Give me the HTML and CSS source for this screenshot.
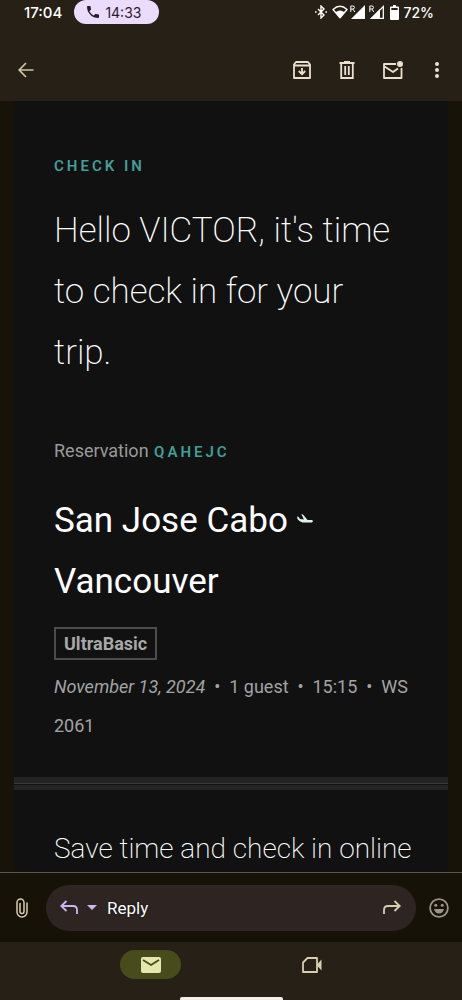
FILE: index.html
```html
<!DOCTYPE html>
<html lang="en">
<head>
<meta charset="utf-8">
<meta name="viewport" content="width=device-width, initial-scale=1">
<title>Check in</title>
<link rel="stylesheet" href="styles.css">
</head>
<body>
<div class="app">
  <header class="top">
    <div class="status">
      <span class="clock">17:04</span>
      <span class="call">
        <svg width="12" height="12" viewBox="3 3 18 18"><path fill="currentColor" d="M20 15.500c-1.200 0-2.400-.2-3.600-.6-.3-.1-.7 0-1 .2l-2.200 2.200c-2.800-1.400-5.100-3.800-6.600-6.600l2.200-2.200c.3-.3.400-.7.200-1-.3-1.100-.5-2.300-.5-3.500 0-.5-.5-1-1-1H4c-.5 0-1 .5-1 1 0 9.400 7.600 17 17 17 .5 0 1-.5 1-1v-3.500c0-.5-.5-1-1-1z"/></svg>
        14:33
      </span>
      <span class="signals">
        <svg width="12" height="14" viewBox="0 0 12 14" fill="none" stroke="currentColor" stroke-width="1.400"><path d="M3 4l6 6-3 3V1l3 3-6 6"/><path d="M0 7h1.600M10.400 7H12"/></svg>
        <svg class="wifi" width="16" height="14" viewBox="0 0 16 14"><path fill="none" stroke="currentColor" stroke-width="1.400" stroke-linejoin="round" d="M1 4.500Q8-1.800 15 4.500L8 12.800z"/><path fill="currentColor" d="M3.500 7.200Q8 4 12.500 7.200L8 13z"/></svg>
        <svg width="15" height="14" viewBox="0 0 15 14"><path fill="currentColor" d="M15 0v14H1z"/><path fill="none" stroke="currentColor" d="M.8 7V1h2Q4.500 1 4.500 2.500T2.800 4H.8M2.800 4l2 3"/></svg>
        <svg class="sim" width="15" height="14" viewBox="0 0 15 14"><path fill="none" stroke="currentColor" stroke-width="1.300" d="M14.300 1.600v11.700H2.600z"/><path fill="currentColor" d="M11 4v10H1z"/><path fill="none" stroke="currentColor" d="M.8 7V1h2Q4.500 1 4.500 2.500T2.800 4H.8M2.800 4l2 3"/></svg>
        <svg class="battery" width="9" height="15" viewBox="0 0 9 15"><path fill="currentColor" fill-rule="evenodd" d="M3 0h3v1.500h2q1 0 1 1V14q0 1-1 1H1q-1 0-1-1V2.500q0-1 1-1h2zM1.300 3v2h6.400V3z"/></svg>
        <span class="percent">72%</span>
      </span>
    </div>
    <nav class="toolbar">
      <button class="icon-button back" aria-label="Back"><svg width="16" height="16" viewBox="0 0 16 16" fill="none" stroke="currentColor" stroke-width="1.700"><path d="M15.500 8H1.500M8 1L1.200 8 8 15"/></svg></button>
      <button class="icon-button" aria-label="Archive"><svg width="18" height="18" viewBox="0 0 18 18" fill="none" stroke="currentColor" stroke-width="1.800"><path stroke-linejoin="round" d="M1 3.500L3 1h12l2 2.500V17H1zM1 4.500h16"/><path d="M9 7v6M5.800 10L9 13.200 12.200 10"/></svg></button>
      <button class="icon-button" aria-label="Delete"><svg width="16" height="18" viewBox="0 0 16 18" fill="none" stroke="currentColor" stroke-width="1.800"><path d="M.5 2h15M5 1h6M2.200 2v15h11.600V2M6.200 5v9M9.800 5v9"/></svg></button>
      <button class="icon-button" aria-label="Mark as unread"><svg width="20" height="18" viewBox="0 0 20 18"><path fill="none" stroke="currentColor" stroke-width="1.800" stroke-linejoin="round" d="M13 3H1v14h17.500V7M1.500 5.500L10 11l5-3.500"/><circle cx="17" cy="3" r="3" fill="currentColor"/></svg></button>
      <button class="icon-button more" aria-label="More options"><svg width="4" height="16" viewBox="0 0 4 16" fill="currentColor"><circle cx="2" cy="2" r="2"/><circle cx="2" cy="8" r="2"/><circle cx="2" cy="14" r="2"/></svg></button>
    </nav>
  </header>

  <main class="mail">
    <article class="letter">
      <section class="block">
        <p class="eyebrow">CHECK IN</p>
        <h1 class="greeting">Hello VICTOR, it's time to check in for your trip.</h1>
        <p class="reservation">Reservation <a class="code" href="#">QAHEJC</a></p>
        <h2 class="route">San Jose Cabo <svg class="plane" width="16" height="10" viewBox="0 0 16 10"><path fill="currentColor" d="M0 2.500l1.300.2 1.800 2.200 3.800.6L4.300 0l1.600.4 4.700 5.500h4.200q1.200.2 1.200 1.200T14.800 8.500H5.500Q2 7.500.5 5z"/></svg> Vancouver</h2>
        <span class="fare">UltraBasic</span>
        <p class="details"><em>November 13, 2024</em> &nbsp;•&nbsp; 1 guest &nbsp;•&nbsp; 15:15 &nbsp;•&nbsp; WS 2061</p>
      </section>
      <hr class="divider">
      <section class="block">
        <p class="save">Save time and check in online</p>
      </section>
    </article>
  </main>

  <div class="reply-bar">
    <button class="icon-button" aria-label="Attach"><svg width="12" height="20" viewBox="0 0 12 20" fill="none" stroke="currentColor" stroke-width="1.500"><path d="M11 4.500V14a5 5 0 0 1-10 0V4.500a3.500 3.500 0 0 1 7 0V13.500a2 2 0 0 1-4 0V5"/></svg></button>
    <div class="reply-pill">
      <button class="icon-button accent" aria-label="Reply type"><svg width="18" height="15" viewBox="0 0 18 15" fill="none" stroke="currentColor" stroke-width="1.800"><path d="M6.500 1L1.300 6l5.200 5M1.500 6H13q4 0 4 4v4"/></svg><svg width="10" height="5" viewBox="0 0 10 5" fill="currentColor"><path d="M0 0h10L5 5z"/></svg></button>
      <input class="reply-input" type="text" aria-label="Reply" placeholder="Reply">
      <button class="icon-button" aria-label="Forward"><svg width="18" height="15" viewBox="0 0 18 15" fill="none" stroke="currentColor" stroke-width="1.800"><path d="M11.500 1l5.200 5-5.200 5M16.500 6H5Q1 6 1 10v4"/></svg></button>
    </div>
    <button class="icon-button muted" aria-label="Emoji"><svg width="20" height="20" viewBox="0 0 20 20"><circle cx="10" cy="10" r="8.900" fill="none" stroke="currentColor" stroke-width="1.800"/><path fill="currentColor" d="M5 11h10q-1.200 4.500-5 4.500T5 11z"/><circle cx="6.800" cy="7.300" r="1.500" fill="currentColor"/><circle cx="13.200" cy="7.300" r="1.500" fill="currentColor"/></svg></button>
  </div>

  <footer class="bottom">
    <nav class="tabs">
      <button class="tab active" aria-label="Mail"><svg width="20" height="16" viewBox="0 0 20 16"><rect width="20" height="16" rx="2" fill="currentColor"/><path d="M2 3l8 5 8-5" fill="none" stroke="#484b1c" stroke-width="1.800"/></svg></button>
      <button class="tab" aria-label="Meet"><svg width="20" height="16" viewBox="0 0 20 16"><path fill="none" stroke="currentColor" stroke-width="1.800" stroke-linejoin="round" d="M5.500 1H15v14H1V5.500z"/><path fill="currentColor" d="M14.500 8l5-5.500v11z"/></svg></button>
    </nav>
    <div class="handle"></div>
  </footer>
</div>
</body>
</html>
```
FILE: styles.css
```css
* {
  box-sizing: border-box;
}

body {
  margin: 0;
  background: #181309;
  color: #fff;
  font-family: Roboto, "Liberation Sans", sans-serif;
}

h1, h2, p {
  margin: 0;
}

svg {
  display: block;
}

button {
  border: 0;
  padding: 0;
  background: none;
  font: inherit;
}

.app {
  display: flex;
  flex-direction: column;
  height: 100vh;
}

.top {
  background: #272017;
}

.status {
  display: flex;
  align-items: center;
  height: 24px;
  padding: 0 28px 0 24px;
  font-family: Inter, Roboto, sans-serif;
  font-size: 15px;
  font-weight: 500;
}

.call {
  display: flex;
  align-items: center;
  gap: 6px;
  height: 24px;
  margin-left: 12px;
  padding: 0 18px 0 13px;
  border-radius: 12px;
  background: #ecdcfb;
  color: #2d1b2a;
  font-size: 14px;
  font-weight: 400;
}

.signals {
  display: flex;
  align-items: center;
  margin-left: auto;
}

.wifi {
  margin: 0 2px 0 5px;
}

.sim {
  margin-left: 4px;
}

.battery {
  margin: 0 4px 0 6px;
}

.percent {
  font-size: 14px;
}

.toolbar {
  display: flex;
  align-items: center;
  gap: 28px;
  height: 77px;
  padding: 15px 23px 0 18px;
}

.icon-button {
  display: flex;
  flex: none;
  align-items: center;
  gap: 9px;
  color: #d9cdb0;
}

.toolbar .icon-button {
  color: #ebdfd0;
}

.toolbar .back {
  margin-right: auto;
  color: #d0c4a4;
}

.more {
  margin-left: 4px;
}

.mail {
  flex: 1;
  min-height: 0;
  overflow: hidden;
  padding: 0 14px;
}

.letter {
  min-height: 100%;
  background: #111;
}

.block {
  padding: 46px 32px 32px 40px;
}

.eyebrow,
.code {
  color: #429e98;
  font-size: 15px;
  font-weight: 600;
  letter-spacing: 3px;
  text-decoration: none;
}

.eyebrow {
  line-height: 39px;
}

.greeting {
  margin-top: 14px;
  padding-right: 16px;
  font-size: 35px;
  font-weight: 200;
  line-height: 61px;
}

.reservation {
  margin-top: 48px;
  color: #9a9a9a;
  font-size: 18px;
  line-height: 39px;
}

.code {
  margin-left: 1px;
}

.route {
  margin-top: 18px;
  font-size: 35px;
  font-weight: 400;
  line-height: 61px;
}

.plane {
  display: inline-block;
  vertical-align: 8px;
  color: #def3f1;
}

.fare {
  display: block;
  width: fit-content;
  margin-top: 15px;
  padding: 0 8px;
  border: 2px solid #4c4c4c;
  color: #a8a8a8;
  font-size: 18px;
  font-weight: 700;
  line-height: 29px;
}

.details {
  margin-top: 7px;
  color: #a3a3a3;
  font-size: 18px;
  line-height: 39px;
}

.divider {
  height: 13px;
  margin: 0;
  border: 0;
  background: linear-gradient(#242424 6px, #3a3a3a 6px, #3a3a3a 7px, #111 7px, #111 8px, #242424 8px);
}

.save {
  font-size: 28px;
  font-weight: 200;
  line-height: 47px;
  white-space: nowrap;
}

.divider + .block {
  padding-top: 35px;
}

.reply-bar {
  display: flex;
  align-items: center;
  gap: 13px;
  height: 70px;
  padding: 0 13px 0 16px;
  border-top: 1px solid #5b574e;
  background: #171208;
}

.reply-bar > .icon-button:first-child {
  margin-right: 5px;
}

.reply-pill {
  display: flex;
  flex: 1;
  align-items: center;
  gap: 10px;
  min-width: 0;
  height: 46px;
  padding: 0 15px 0 14px;
  border-radius: 23px;
  background: #2e2523;
}

.reply-bar .accent {
  color: #d2b4f5;
}

.reply-bar .muted {
  color: #9b9488;
}

.reply-input {
  flex: 1;
  min-width: 0;
  padding: 0;
  border: 0;
  outline: 0;
  background: none;
  color: #fff;
  font: 400 17px Roboto, sans-serif;
}

.reply-input::placeholder {
  color: #fff;
  opacity: 1;
  text-shadow: 0 0 2px #000;
}

.bottom {
  height: 58px;
  background: #272017;
}

.tabs {
  display: flex;
  justify-content: center;
  gap: 100px;
  padding-top: 8px;
}

.tab {
  display: flex;
  align-items: center;
  justify-content: center;
  width: 61px;
  height: 29px;
  border-radius: 15px;
  color: #d9cdb0;
}

.active {
  background: #484b1c;
  color: #e5e8ad;
}

.handle {
  width: 103px;
  height: 3px;
  margin: 18px auto 0;
  border-radius: 2px 2px 0 0;
  background: #f3eee8;
}
```
